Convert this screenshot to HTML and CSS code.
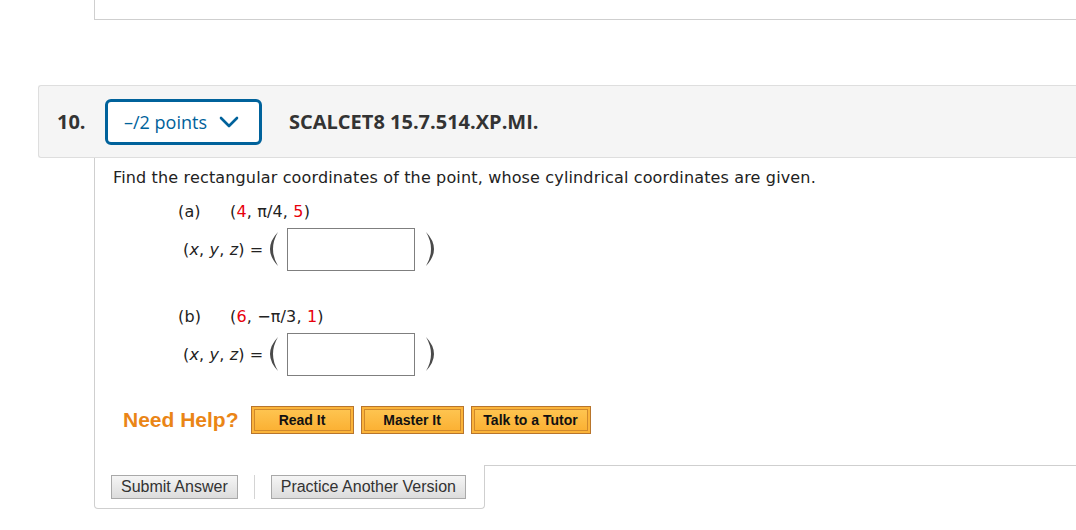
FILE: index.html
```html
<!DOCTYPE html>
<html>
<head>
<meta charset="utf-8">
<link rel="stylesheet" href="styles.css">
</head>
<body>
<div class="prev"></div>

<div class="qhead">
  <span class="qnum">10.</span>
  <button class="points">–/2 points
    <svg class="chev" width="20" height="12" viewBox="0 0 20 12"><path d="M2 2 L10 10 L18 2" fill="none" stroke="#00629b" stroke-width="2.6" stroke-linecap="round" stroke-linejoin="round"/></svg>
  </button>
  <span class="qid">SCALCET8 15.7.514.XP.MI.</span>
</div>

<div class="question">
  <div class="qbody">
    <p class="prompt">Find the rectangular coordinates of the point, whose cylindrical coordinates are given.</p>

    <div class="part">
      <div class="given"><span class="lbl">(a)</span><span>(<span class="red">4</span>, π/4, <span class="red">5</span>)</span></div>
      <div class="answer">
        <span class="xyz">(<i>x</i>, <i>y</i>, <i>z</i>) =</span>
        <svg class="paren" width="12" height="44" viewBox="0 0 12 44"><path d="M11 5 Q-5 22 11 39 Q1 22 11 5 Z" fill="#4a4a4a"/></svg>
        <span class="box"></span>
        <svg class="paren rp" width="12" height="44" viewBox="0 0 12 44"><path d="M1 5 Q17 22 1 39 Q11 22 1 5 Z" fill="#4a4a4a"/></svg>
      </div>
    </div>

    <div class="part partb">
      <div class="given"><span class="lbl">(b)</span><span>(<span class="red">6</span>, −π/3, <span class="red">1</span>)</span></div>
      <div class="answer">
        <span class="xyz">(<i>x</i>, <i>y</i>, <i>z</i>) =</span>
        <svg class="paren" width="12" height="44" viewBox="0 0 12 44"><path d="M11 5 Q-5 22 11 39 Q1 22 11 5 Z" fill="#4a4a4a"/></svg>
        <span class="box"></span>
        <svg class="paren rp" width="12" height="44" viewBox="0 0 12 44"><path d="M1 5 Q17 22 1 39 Q11 22 1 5 Z" fill="#4a4a4a"/></svg>
      </div>
    </div>

    <div class="help">
      <span class="needhelp">Need Help?</span>
      <button class="obtn b1"><span>Read It</span></button>
      <button class="obtn b2"><span>Master It</span></button>
      <button class="obtn b3"><span>Talk to a Tutor</span></button>
    </div>
  </div>

  <div class="qfoot">
    <div class="tab">
      <button class="gbtn">Submit Answer</button>
      <span class="sep"></span>
      <button class="gbtn">Practice Another Version</button>
    </div>
    <div class="filler"></div>
  </div>
</div>
</body>
</html>
```

FILE: styles.css
```css
html, body {
  margin: 0;
  padding: 0;
  background: #fff;
}
body {
  width: 1076px;
  height: 530px;
  overflow: hidden;
  font-family: "DejaVu Sans", Verdana, sans-serif;
  color: #222;
}
.prev {
  margin-left: 94px;
  height: 19px;
  border-left: 1px solid #cfcfcf;
  border-bottom: 1px solid #cfcfcf;
}
.qhead {
  margin-top: 65px;
  margin-left: 38px;
  height: 71px;
  background: #f5f5f5;
  border: 1px solid #dedede;
  border-right: none;
  border-radius: 3px 0 0 3px;
  display: flex;
  align-items: center;
}
.qnum {
  font-family: "Open Sans", sans-serif;
  font-weight: 700;
  font-size: 20px;
  color: #333;
  width: 48px;
  padding-left: 18px;
}
.points {
  box-sizing: border-box;
  width: 157px;
  height: 46px;
  border: 3px solid #00629b;
  border-radius: 6px;
  background: #fff;
  font-family: "Open Sans", sans-serif;
  font-size: 18px;
  color: #00629b;
  display: flex;
  align-items: center;
  padding: 0 0 0 16px;
  gap: 12px;
  margin: 0;
}
.chev {
  display: block;
  margin-top: 1px;
}
.qid {
  margin-left: 27px;
  font-family: "Open Sans", sans-serif;
  font-weight: 700;
  font-size: 20px;
  color: #333;
}
.question {
  margin-left: 94px;
}
.qbody {
  border-left: 1px solid #cfcfcf;
  padding-left: 18px;
  padding-top: 10px;
  padding-bottom: 31px;
}
.prompt {
  margin: 0;
  font-size: 16px;
  letter-spacing: 0.15px;
  line-height: 20px;
  color: #222;
}
.part {
  margin-left: 65px;
  margin-top: 14px;
  font-size: 16px;
  letter-spacing: 0.15px;
  color: #222;
}
.partb {
  margin-top: 36px;
}
.given {
  display: flex;
  height: 20px;
  line-height: 20px;
}
.lbl {
  width: 52px;
}
.red {
  color: #e8000b;
}
.answer {
  display: flex;
  align-items: center;
  margin-top: 5px;
  margin-left: 5px;
  height: 44px;
}
.xyz {
  margin-right: 4px;
}
.box {
  display: inline-block;
  box-sizing: border-box;
  width: 128px;
  height: 43px;
  border: 1px solid #7f7f7f;
  margin: 0 10px 0 8px;
  background: #fff;
}
.paren {
  display: block;
}
.help {
  display: flex;
  align-items: center;
  margin-top: 30px;
  margin-left: 10px;
  height: 28px;
}
.needhelp {
  font-family: "Liberation Sans", Arial, sans-serif;
  font-weight: 700;
  font-size: 21px;
  color: #ea8516;
  margin-right: 12px;
}
.obtn {
  box-sizing: border-box;
  height: 28px;
  padding: 2px;
  margin: 0 7px 0 0;
  border: 1px solid #b8752c;
  background: #fbb43a;
  display: flex;
}
.obtn span {
  flex: 1;
  display: flex;
  align-items: center;
  justify-content: center;
  border: 1px solid #d0892c;
  background: linear-gradient(#fec450, #fbb134);
  font-family: "Liberation Sans", Arial, sans-serif;
  font-weight: 700;
  font-size: 14px;
  color: #111;
}
.b1 { width: 103px; }
.b2 { width: 103px; }
.b3 { width: 120px; margin-right: 0; }
.qfoot {
  display: flex;
}
.tab {
  display: flex;
  align-items: center;
  border-left: 1px solid #cfcfcf;
  border-right: 1px solid #cfcfcf;
  border-bottom: 1px solid #cfcfcf;
  border-radius: 0 0 4px 4px;
  padding: 10px 18px 9px 16px;
}
.filler {
  flex: 1;
  border-top: 1px solid #cfcfcf;
}
.gbtn {
  box-sizing: border-box;
  height: 24px;
  margin: 0;
  padding: 0 9px;
  border: 1px solid #a9a9a9;
  background: linear-gradient(#f5f5f5, #dcdcdc);
  font-family: "Liberation Sans", Arial, sans-serif;
  font-size: 16px;
  color: #333;
}
.sep {
  width: 1px;
  height: 24px;
  background: #d4d4d4;
  margin: 0 16px;
}
```
